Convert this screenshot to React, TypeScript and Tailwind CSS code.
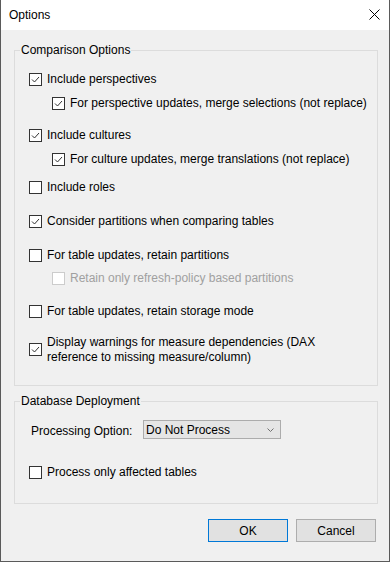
const font = { fontFamily: '"Liberation Sans", Arial, sans-serif' };

const Check = ({ checked, disabled }: { checked?: boolean; disabled?: boolean }) => {
  return (
    <div
      className={
        "flex h-[13px] w-[13px] shrink-0 items-center justify-center border bg-white " +
        (disabled ? "border-[#cccccc]" : "border-[#333333]")
      }
    >
      {checked && (
        <svg width="11" height="11" viewBox="0 0 11 11">
          <path d="M2 5.5 L4.5 8 L9 3" fill="none" stroke="#333333" strokeWidth="1" />
        </svg>
      )}
    </div>
  );
};

type RowProps = {
  label: string;
  checked?: boolean;
  disabled?: boolean;
  sub?: boolean;
  className?: string;
};

const Row = ({ label, checked, disabled, sub, className }: RowProps) => {
  return (
    <div className={"flex h-[16px] items-center gap-[5px] " + (sub ? "pl-[37px] " : "pl-[14px] ") + (className ?? "")}>
      <Check checked={checked} disabled={disabled} />
      <span className={"whitespace-nowrap leading-[14px] " + (disabled ? "text-[#a0a0a0]" : "text-black")}>{label}</span>
    </div>
  );
};

const GroupBox = ({ title, className, children }: { title: string; className?: string; children: React.ReactNode }) => {
  return (
    <div className={"relative border border-[#dcdcdc] " + (className ?? "")}>
      {/* label sits over the top border */}
      <span className="absolute left-[5px] top-[-8px] bg-[#f0f0f0] px-[1px] leading-[14px] text-black">{title}</span>
      {children}
    </div>
  );
};

export default function App() {
  return (
    <div className="flex h-[562px] w-[390px] flex-col border-x border-b border-[#5a5a5a] text-[12px]" style={font}>
      {/* title bar */}
      <div className="flex h-[30px] shrink-0 items-center justify-between bg-white pl-[8px] pr-[9px]">
        <span className="text-[12px] text-black">Options</span>
        <svg width="11" height="11" viewBox="0 0 11 11" className="mt-[-2px]">
          <path d="M0.5 0.5 L10.5 10.5 M10.5 0.5 L0.5 10.5" stroke="#000" strokeWidth="1" />
        </svg>
      </div>

      <div className="flex flex-1 flex-col bg-[#f0f0f0] pl-[13px] pr-[11px]">
        <GroupBox title="Comparison Options" className="mt-[20px] pb-[20px] pt-[20px]">
          <Row label="Include perspectives" checked />
          <Row label="For perspective updates, merge selections (not replace)" checked sub className="mt-[8px]" />
          <Row label="Include cultures" checked className="mt-[16px]" />
          <Row label="For culture updates, merge translations (not replace)" checked sub className="mt-[8px]" />
          <Row label="Include roles" className="mt-[12px]" />
          <Row label="Consider partitions when comparing tables" checked className="mt-[18px]" />
          <Row label="For table updates, retain partitions" className="mt-[18px]" />
          <Row label="Retain only refresh-policy based partitions" sub disabled className="mt-[7px]" />
          <Row label="For table updates, retain storage mode" className="mt-[17px]" />
          <div className="mt-[14px] flex items-center gap-[5px] pl-[14px]">
            <Check checked />
            <span className="mt-[2px] leading-[15px] text-black">
              Display warnings for measure dependencies (DAX
              <br />
              reference to missing measure/column)
            </span>
          </div>
        </GroupBox>

        <GroupBox title="Database Deployment" className="mt-[15px] pb-[23px] pt-[18px]">
          <div className="flex h-[19px] items-center">
            <span className="w-[128px] pl-[16px] pt-[2px] text-black">Processing Option:</span>
            <div className="flex h-[19px] w-[138px] items-center justify-between border border-[#acacac] bg-[#e5e5e5] pl-[2px] pr-[6px]">
              <span className="text-black">Do Not Process</span>
              <svg width="7" height="4" viewBox="0 0 7 4">
                <path d="M0.5 0.5 L3.5 3.5 L6.5 0.5" fill="none" stroke="#707070" strokeWidth="1" />
              </svg>
            </div>
          </div>
          <Row label="Process only affected tables" className="mt-[25px]" />
        </GroupBox>

        <div className="mt-[15px] flex justify-end gap-[8px] pr-[2px]">
          <button className="h-[23px] w-[80px] border border-[#0078d7] bg-[#e1e1e1] text-black">OK</button>
          <button className="h-[23px] w-[80px] border border-[#adadad] bg-[#e1e1e1] text-black">Cancel</button>
        </div>
      </div>
    </div>
  );
}
